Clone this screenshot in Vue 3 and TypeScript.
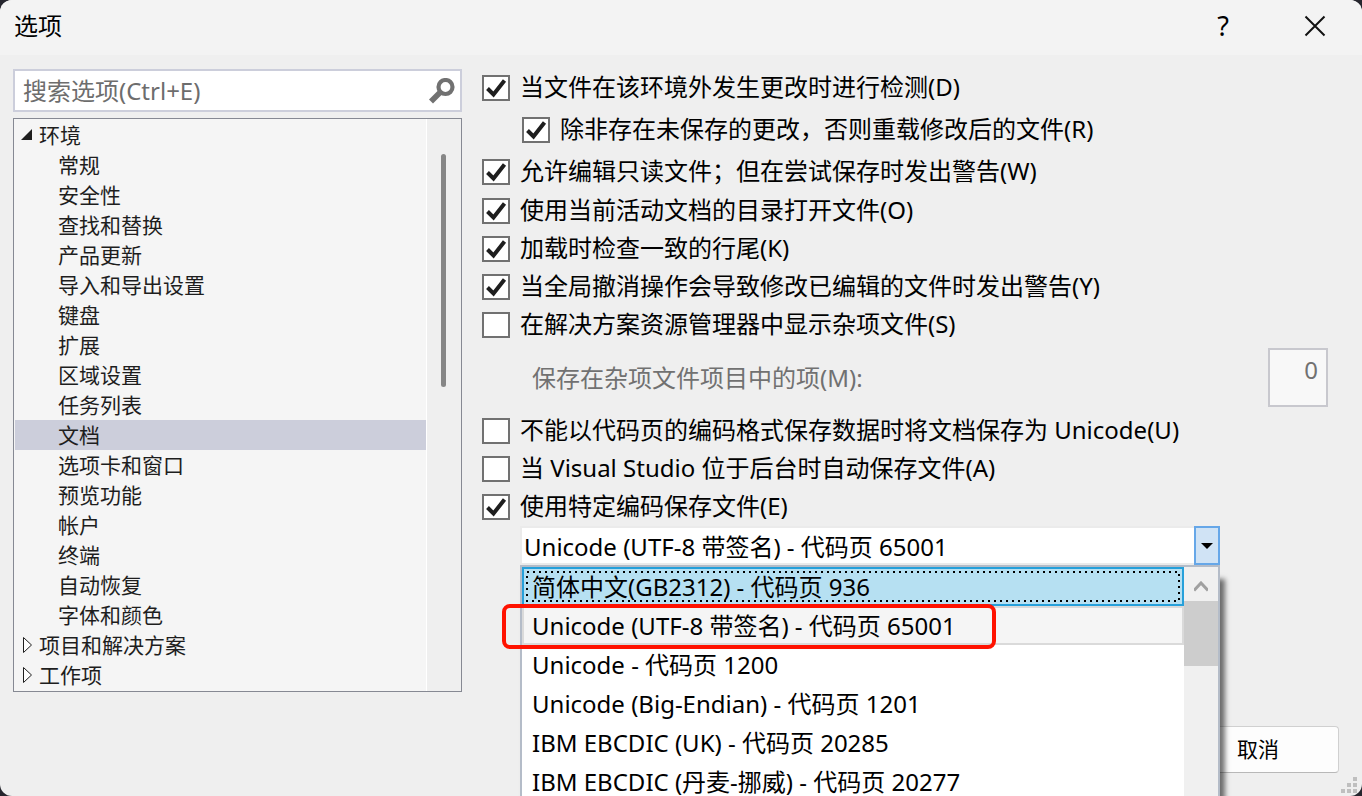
<script setup lang="ts">
import { ref } from 'vue'

interface TreeRow {
  label: string
  level: number
  expanded?: boolean
}

interface CheckOption {
  id: string
  label: string
  checked: boolean
  nested?: boolean
}

const children = [
  '常规', '安全性', '查找和替换', '产品更新', '导入和导出设置', '键盘', '扩展', '区域设置',
  '任务列表', '文档', '选项卡和窗口', '预览功能', '帐户', '终端', '自动恢复', '字体和颜色',
]

const tree: TreeRow[] = [
  { label: '环境', level: 1, expanded: true },
  ...children.map((label) => ({ label, level: 2 })),
  { label: '项目和解决方案', level: 1, expanded: false },
  { label: '工作项', level: 1, expanded: false },
]

const selected = ref('文档')

const groups = ref<CheckOption[][]>([
  [
    { id: 'detect', label: '当文件在该环境外发生更改时进行检测(D)', checked: true },
    { id: 'reload', label: '除非存在未保存的更改，否则重载修改后的文件(R)', checked: true, nested: true },
    { id: 'readonly', label: '允许编辑只读文件；但在尝试保存时发出警告(W)', checked: true },
  ],
  [
    { id: 'directory', label: '使用当前活动文档的目录打开文件(O)', checked: true },
    { id: 'eol', label: '加载时检查一致的行尾(K)', checked: true },
    { id: 'undo', label: '当全局撤消操作会导致修改已编辑的文件时发出警告(Y)', checked: true },
    { id: 'misc', label: '在解决方案资源管理器中显示杂项文件(S)', checked: false },
  ],
  [
    { id: 'unicode', label: '不能以代码页的编码格式保存数据时将文档保存为 Unicode(U)', checked: false },
    { id: 'autosave', label: '当 Visual Studio 位于后台时自动保存文件(A)', checked: false },
    { id: 'encoding', label: '使用特定编码保存文件(E)', checked: true },
  ],
])

const encodings = [
  '简体中文(GB2312) - 代码页 936',
  'Unicode (UTF-8 带签名) - 代码页 65001',
  'Unicode - 代码页 1200',
  'Unicode (Big-Endian) - 代码页 1201',
  'IBM EBCDIC (UK) - 代码页 20285',
  'IBM EBCDIC (丹麦-挪威) - 代码页 20277',
]
const current = ref(encodings[1])
const focused = ref(encodings[0])
const query = ref('')
const miscCount = ref('0')
</script>

<template>
  <div class="dialog" role="dialog" aria-labelledby="dialog-title">
    <header class="titlebar">
      <h1 id="dialog-title">选项</h1>
      <button class="caption help" type="button" aria-label="帮助">?</button>
      <button class="caption" type="button" aria-label="关闭">
        <svg width="22" height="22" viewBox="0 0 22 22">
          <path d="M1.5 1.5 20.5 20.5M20.5 1.5 1.5 20.5" fill="none" stroke="#111" stroke-width="2" />
        </svg>
      </button>
    </header>

    <div class="content">
      <aside class="side">
        <div class="search">
          <input v-model="query" type="text" aria-label="搜索选项" placeholder="搜索选项(Ctrl+E)" />
          <svg width="26" height="26" viewBox="0 0 26 26">
            <circle cx="16.5" cy="9" r="7" fill="none" stroke="#717171" stroke-width="4.2" />
            <path d="M12 13.500 2 23.500" stroke="#717171" stroke-width="5.6" />
          </svg>
        </div>

        <div class="tree-box">
          <ul class="tree" role="tree">
            <li v-for="row in tree" :key="row.label" role="none">
              <button
                type="button"
                role="treeitem"
                :class="['node', { child: row.level === 2, selected: row.label === selected }]"
                :aria-expanded="row.expanded"
                :aria-selected="row.label === selected"
                @click="selected = row.label"
              >
                <svg v-if="row.level === 1" width="14" height="18" viewBox="0 0 14 18">
                  <path v-if="row.expanded" d="M12 3V14H1Z" fill="#1e1e1e" />
                  <path v-else d="M3.500 1.500V16.500L11.500 9Z" fill="#fff" stroke="#1e1e1e" />
                </svg>
                <span>{{ row.label }}</span>
              </button>
            </li>
          </ul>
          <div class="tree-scroll"><div class="tree-thumb"></div></div>
        </div>
      </aside>

      <main class="settings">
        <template v-for="(group, g) in groups" :key="g">
          <div v-if="g === 2" class="misc-row">
            <label for="misc-count">保存在杂项文件项目中的项(M):</label>
            <input id="misc-count" v-model="miscCount" type="text" disabled />
          </div>
          <div :class="['group', { spaced: g === 0 }]">
            <label v-for="o in group" :key="o.id" :class="['check', { nested: o.nested }]">
              <span class="box">
                <input v-model="o.checked" type="checkbox" />
                <svg v-if="o.checked" width="24" height="22" viewBox="0 0 24 22">
                  <path d="M3.500 11.500 9.500 17.500 20.500 3.500" fill="none" stroke="#1e1e1e" stroke-width="4" />
                </svg>
              </span>
              <span class="check-text">{{ o.label }}</span>
            </label>
          </div>
        </template>

        <div class="combo">
          <select v-model="current" aria-label="编码">
            <option v-for="e in encodings" :key="e" :value="e">{{ e }}</option>
          </select>
          <span class="drop">
            <svg width="12" height="6" viewBox="0 0 12 6"><path d="M0 0H12L6 6Z" fill="#000" /></svg>
          </span>

          <div class="popup">
            <ul role="listbox" aria-label="编码">
              <li
                v-for="e in encodings"
                :key="e"
                role="option"
                :aria-selected="e === current"
                :class="{ focused: e === focused, current: e === current }"
                @mouseenter="focused = e"
                @click="current = e"
              >
                <svg v-if="e === focused" class="dots" width="100%" height="100%">
                  <rect x="3" y="3" fill="none" stroke="#000" stroke-width="2" stroke-dasharray="2 4" />
                </svg>
                <span>{{ e }}</span>
                <span v-if="e === encodings[1]" class="marker"></span>
              </li>
            </ul>
            <div class="popup-scroll">
              <div class="up">
                <svg width="14" height="11" viewBox="0 0 14 11">
                  <path d="M0 9.500 7 2 14 9.500" fill="none" stroke="#a0a0a0" stroke-width="3" />
                </svg>
              </div>
              <div class="popup-thumb"></div>
            </div>
          </div>
        </div>
      </main>
    </div>

    <footer class="footer">
      <button class="cancel" type="button">取消</button>
    </footer>

    <svg class="grip" width="16" height="16" viewBox="0 0 16 16" fill="#bfbfbf">
      <path d="M12 0h4v4h-4zM6 6h4v4H6zM12 6h4v4h-4zM0 12h4v4H0zM6 12h4v4H6zM12 12h4v4h-4z" />
    </svg>
  </div>
</template>

<style>
body {
  background: #26262e;
}
</style>

<style scoped>
.dialog,
.dialog * {
  box-sizing: border-box;
}

.dialog {
  position: relative;
  display: flex;
  flex-direction: column;
  height: 100vh;
  overflow: hidden;
  border-radius: 12px;
  background: #efefef;
  color: #000;
  font: 24px/38px "Noto Sans", "Noto Sans CJK SC", sans-serif;
}

button,
input,
select {
  margin: 0;
  padding: 0;
  border: 0;
  background: none;
  color: inherit;
  font: inherit;
  outline: none;
}

ul {
  margin: 0;
  padding: 0;
  list-style: none;
}

svg {
  display: block;
  flex: none;
}

.titlebar {
  display: flex;
  align-items: center;
  flex: none;
  height: 55px;
  padding: 0 1px 0 14px;
  background: #f3f3f3;
}

.titlebar h1 {
  flex: 1;
  margin: 0;
  padding-bottom: 4px;
  font-size: 24px;
  font-weight: 400;
}

.caption {
  display: flex;
  align-items: center;
  justify-content: center;
  width: 92px;
  height: 52px;
  margin-bottom: 3px;
}

.help {
  font-size: 27px;
}

.content {
  display: flex;
  gap: 20px;
  padding: 14px 34px 0 13px;
}

.side {
  display: flex;
  flex-direction: column;
  gap: 6px;
  flex: 0 0 449px;
}

.search {
  display: flex;
  align-items: center;
  height: 43px;
  padding: 0 5px 0 8px;
  border: 2px solid #cccedb;
  background: #fff;
}

.search input {
  flex: 1;
  min-width: 0;
  height: 38px;
}

.search input::placeholder {
  color: #6d6d6d;
  opacity: 1;
}

.tree-box {
  display: flex;
  border: 1px solid #868993;
  background: #f5f5f5;
}

.tree {
  flex: 1;
  padding: 1px 0 1px 1px;
}

.node {
  display: flex;
  align-items: center;
  gap: 5px;
  width: 100%;
  height: 30px;
  padding-left: 5px;
  color: #1e1e1e;
  font-size: 21px;
  line-height: 30px;
  text-align: left;
}

.node.child {
  padding-left: 43px;
}

.node.selected {
  background: #cccedb;
}

.tree-scroll {
  width: 35px;
  padding: 35px 0 0 14px;
  border-left: 1px solid #fff;
  background: #efefef;
}

.tree-thumb {
  width: 5px;
  height: 233px;
  border-radius: 3px;
  background: #868686;
}

.settings {
  flex: 1;
  min-width: 0;
}

.group {
  display: flex;
  flex-direction: column;
}

.group.spaced {
  gap: 4px;
  padding-bottom: 1px;
}

.check {
  display: flex;
  align-items: center;
  gap: 10px;
  height: 38px;
  white-space: nowrap;
}

.check.nested {
  padding-left: 40px;
}

.check-text {
  padding-bottom: 2px;
}

.box {
  display: grid;
  flex: none;
  width: 28px;
  height: 26px;
  border: 2px solid #717171;
  background: #fff;
}

.box input,
.box svg {
  grid-area: 1 / 1;
}

.box input {
  width: 24px;
  height: 22px;
  appearance: none;
}

.box svg {
  pointer-events: none;
}

.misc-row {
  display: flex;
  align-items: center;
  justify-content: space-between;
  padding: 4px 0 5px 50px;
  color: #717171;
}

.misc-row input {
  width: 60px;
  height: 59px;
  padding: 0 8px 16px 0;
  border: 2px solid #c8c8ce;
  background: #f8f8f8;
  color: #717171;
  text-align: right;
}

.combo {
  position: relative;
  display: flex;
  height: 39px;
  margin: 0 108px 0 38px;
}

.combo select {
  flex: 1;
  min-width: 0;
  padding-left: 2px;
  border: 2px solid #ebebeb;
  border-right: 0;
  background: #fff;
  appearance: none;
}

.drop {
  display: flex;
  align-items: center;
  justify-content: center;
  width: 26px;
  border: 2px solid #66a7e8;
  background: #d0e3f5;
  pointer-events: none;
}

.popup {
  position: absolute;
  top: 100%;
  right: 0;
  left: 0;
  z-index: 2;
  display: flex;
  border: 2px solid #b4bcc8;
  background: #fff;
  box-shadow: 5px 14px 5px rgba(0, 0, 0, 0.55);
}

.popup ul {
  flex: 1;
  min-width: 0;
}

.popup li {
  position: relative;
  display: flex;
  align-items: center;
  height: 39px;
  padding-left: 8px;
  border: 2px solid transparent;
  line-height: 35px;
  white-space: nowrap;
}

.popup li.focused {
  border-color: #26a0da;
  background: #b6e0f2;
}

.popup li.current {
  border-color: #dadada;
  background: #f5f5f5;
}

.dots {
  position: absolute;
  inset: 0;
}

.dots rect {
  width: calc(100% - 6px);
  height: calc(100% - 6px);
}

.marker {
  position: absolute;
  top: -4px;
  left: -22px;
  width: 494px;
  height: 45px;
  border: 4px solid #ff1200;
  border-radius: 8px;
}

.popup-scroll {
  width: 34px;
  background: #f0f0f0;
}

.up {
  display: flex;
  align-items: center;
  justify-content: center;
  height: 34px;
  padding-top: 4px;
}

.popup-thumb {
  height: 65px;
  background: #cdcdcd;
}

.footer {
  display: flex;
  justify-content: flex-end;
  margin-top: auto;
  padding: 0 23px 23px 0;
}

.cancel {
  width: 162px;
  height: 47px;
  padding-bottom: 2px;
  border: 1px solid #d0d0d0;
  border-bottom-color: #b8b8b8;
  border-radius: 4px;
  background: #fdfdfd;
  font-size: 21px;
}

.grip {
  position: absolute;
  right: 5px;
  bottom: 3px;
}
</style>
